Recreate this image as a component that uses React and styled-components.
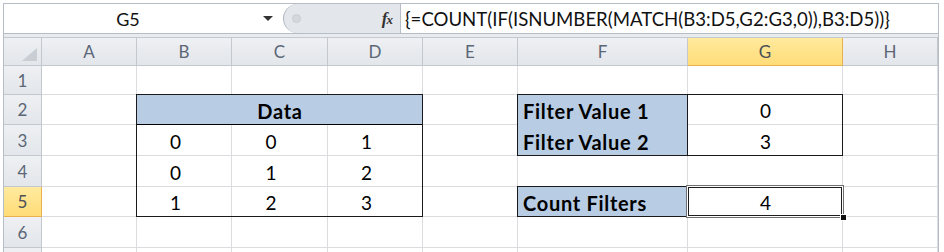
import styled, { createGlobalStyle } from 'styled-components';

const GlobalStyle = createGlobalStyle`
  html, body {
    margin: 0;
    padding: 0;
    background: #ffffff;
    overflow: hidden;
  }
  body {
    width: 944px;
    height: 252px;
    font-family: Lato, "Liberation Sans", sans-serif;
  }
`;

const Frame = styled.div`
  margin: 3px 0 0 3px;
  width: 936px;
  height: 249px;
  box-sizing: border-box;
  border: 1px solid #b7bdc6;
  border-bottom: none;
  overflow: hidden;
  background: #ffffff;
`;

const FormulaBar = styled.div`
  display: flex;
  height: 29px;
  border-bottom: 1px solid #b7bdc6;
`;

const NameBox = styled.div`
  display: flex;
  width: 279px;
  align-items: center;
`;

const NameText = styled.div`
  width: 248px;
  text-align: center;
  font-size: 18px;
  color: #111;
`;

const Caret = styled.div`
  width: 31px;
  display: flex;
  justify-content: center;
  &::before {
    content: '';
    border-left: 5px solid transparent;
    border-right: 5px solid transparent;
    border-top: 5px solid #333;
  }
`;

const Divider = styled.div`
  width: 117px;
  display: flex;
  align-items: center;
  justify-content: space-between;
  background: #e3e6ea;
  border-left: 1px solid #aeb5bf;
  border-radius: 15px 0 0 15px;
  padding: 0 8px 0 8px;
  box-sizing: border-box;
`;

const Knob = styled.span`
  width: 7px;
  height: 7px;
  border-radius: 50%;
  background: #d4d8dd;
  border: 1px solid #c8cdd3;
`;

const Fx = styled.span`
  font-family: "Liberation Serif", serif;
  font-style: italic;
  font-weight: bold;
  font-size: 17px;
  color: #333;
  letter-spacing: -1px;
  & small {
    font-size: 13px;
  }
`;

const FormulaInput = styled.div`
  flex: 1;
  display: flex;
  align-items: center;
  border-left: 1px solid #b7bdc6;
  padding-left: 4px;
  font-size: 18.6px;
  color: #111;
  white-space: nowrap;
`;

const Band = styled.div`
  height: 3px;
  background: #e9ecef;
  border-bottom: 1px solid #c4c9d0;
`;

const Grid = styled.div`
  display: grid;
  grid-template-columns: 38px 95px 95px 96px 95px 95px 170px 155px 95px;
  grid-template-rows: 28px 29px 30px 31px 31px 30px 31px 31px;
`;

const Head = styled.div`
  grid-column: ${({ $col }) => $col};
  grid-row: ${({ $row }) => $row};
  display: flex;
  align-items: center;
  justify-content: center;
  box-sizing: border-box;
  font-size: 17px;
  color: ${({ $active }) => ($active ? '#4a4f57' : '#5b6676')};
  background: ${({ $active }) =>
    $active ? 'linear-gradient(#ffea9e, #ffdc78)' : 'linear-gradient(#eef0f3, #e3e6ea)'};
  border-right: 1px solid ${({ $active }) => ($active ? '#e9b04e' : '#c3c8cf')};
  border-bottom: 1px solid ${({ $active }) => ($active ? '#e9b04e' : '#c3c8cf')};
`;

const Corner = styled(Head)`
  position: relative;
  &::after {
    content: '';
    position: absolute;
    right: 4px;
    bottom: 4px;
    width: 15px;
    height: 13px;
    background: #c9ced5;
    clip-path: polygon(100% 0, 100% 100%, 0 100%);
  }
`;

const Cell = styled.div`
  grid-column: ${({ $col }) => $col};
  grid-row: ${({ $row }) => $row};
  box-sizing: border-box;
  border-right: 1px solid #dadcdf;
  border-bottom: 1px solid #dadcdf;
`;

const Fill = styled.div`
  grid-column: ${({ $col }) => $col};
  grid-row: ${({ $row }) => $row};
  margin: -1px 0 0 -1px;
  background: #b8cce4;
  border-bottom: ${({ $under }) => ($under ? '1px solid #000' : 'none')};
`;

const Box = styled.div`
  grid-column: ${({ $col }) => $col};
  grid-row: ${({ $row }) => $row};
  margin: -1px 0 0 -1px;
  border: 1px solid #1a1a1a;
`;

const Value = styled.div`
  grid-column: ${({ $col }) => $col};
  grid-row: ${({ $row }) => $row};
  display: flex;
  align-items: flex-end;
  justify-content: ${({ $left }) => ($left ? 'flex-start' : 'center')};
  padding: 0 ${({ $shift }) => $shift || 0}px 2px ${({ $left }) => ($left ? 5 : 0)}px;
  font-size: ${({ $bold }) => ($bold ? 20 : 19)}px;
  font-weight: ${({ $bold }) => ($bold ? 700 : 400)};
  letter-spacing: ${({ $bold }) => ($bold ? '0.7px' : 'normal')};
  line-height: 24px;
  color: #000;
  white-space: nowrap;
  position: relative;
  z-index: 1;
`;

const Selection = styled.div`
  grid-column: 8;
  grid-row: 6;
  margin: -2px -1px -1px -2px;
  border: 1px solid #6f6f6f;
  box-shadow: inset 0 0 0 1px #ffffff, inset 0 0 0 2px #1e1e1e;
  position: relative;
  z-index: 2;
  &::after {
    content: '';
    position: absolute;
    right: -4px;
    bottom: -4px;
    width: 5px;
    height: 5px;
    background: #111;
    border: 1px solid #fff;
  }
`;

const columns = ['A', 'B', 'C', 'D', 'E', 'F', 'G', 'H'];
const rows = [1, 2, 3, 4, 5, 6, 7];
const data = [
  [0, 0, 1],
  [0, 1, 2],
  [1, 2, 3],
];

export default function App() {
  return (
    <>
      <GlobalStyle />
      <Frame>
        <FormulaBar>
          <NameBox>
            <NameText>G5</NameText>
            <Caret />
          </NameBox>
          <Divider>
            <Knob />
            <Fx>
              f<small>x</small>
            </Fx>
          </Divider>
          <FormulaInput>{'{=COUNT(IF(ISNUMBER(MATCH(B3:D5,G2:G3,0)),B3:D5))}'}</FormulaInput>
        </FormulaBar>
        <Band />
        <Grid>
          <Corner $col={1} $row={1} />
          {columns.map((c, i) => (
            <Head key={c} $col={i + 2} $row={1} $active={c === 'G'}>
              {c}
            </Head>
          ))}
          {rows.map((r) => (
            <Head key={r} $col={1} $row={r + 1} $active={r === 5}>
              {r < 7 ? r : ''}
            </Head>
          ))}
          {rows.map((r) =>
            columns.map((c, i) => <Cell key={c + r} $col={i + 2} $row={r + 1} />)
          )}

          <Fill $col="3 / 6" $row={3} $under />
          <Fill $col={7} $row="3 / 5" />
          <Fill $col={7} $row={6} />

          <Box $col="3 / 6" $row="3 / 7" />
          <Box $col="7 / 9" $row="3 / 5" />
          <Box $col={7} $row="3 / 5" />
          <Box $col="7 / 9" $row={6} />
          <Box $col={7} $row={6} />

          <Value $col="3 / 6" $row={3} $bold>
            Data
          </Value>
          {data.map((line, ri) =>
            line.map((v, ci) => (
              <Value key={`${ri}-${ci}`} $col={ci + 3} $row={ri + 4} $shift={18}>
                {v}
              </Value>
            ))
          )}

          <Value $col={7} $row={3} $bold $left>
            Filter Value 1
          </Value>
          <Value $col={7} $row={4} $bold $left>
            Filter Value 2
          </Value>
          <Value $col={7} $row={6} $bold $left>
            Count Filters
          </Value>
          <Value $col={8} $row={3}>0</Value>
          <Value $col={8} $row={4}>3</Value>
          <Value $col={8} $row={6}>4</Value>
          <Selection />
        </Grid>
      </Frame>
    </>
  );
}
